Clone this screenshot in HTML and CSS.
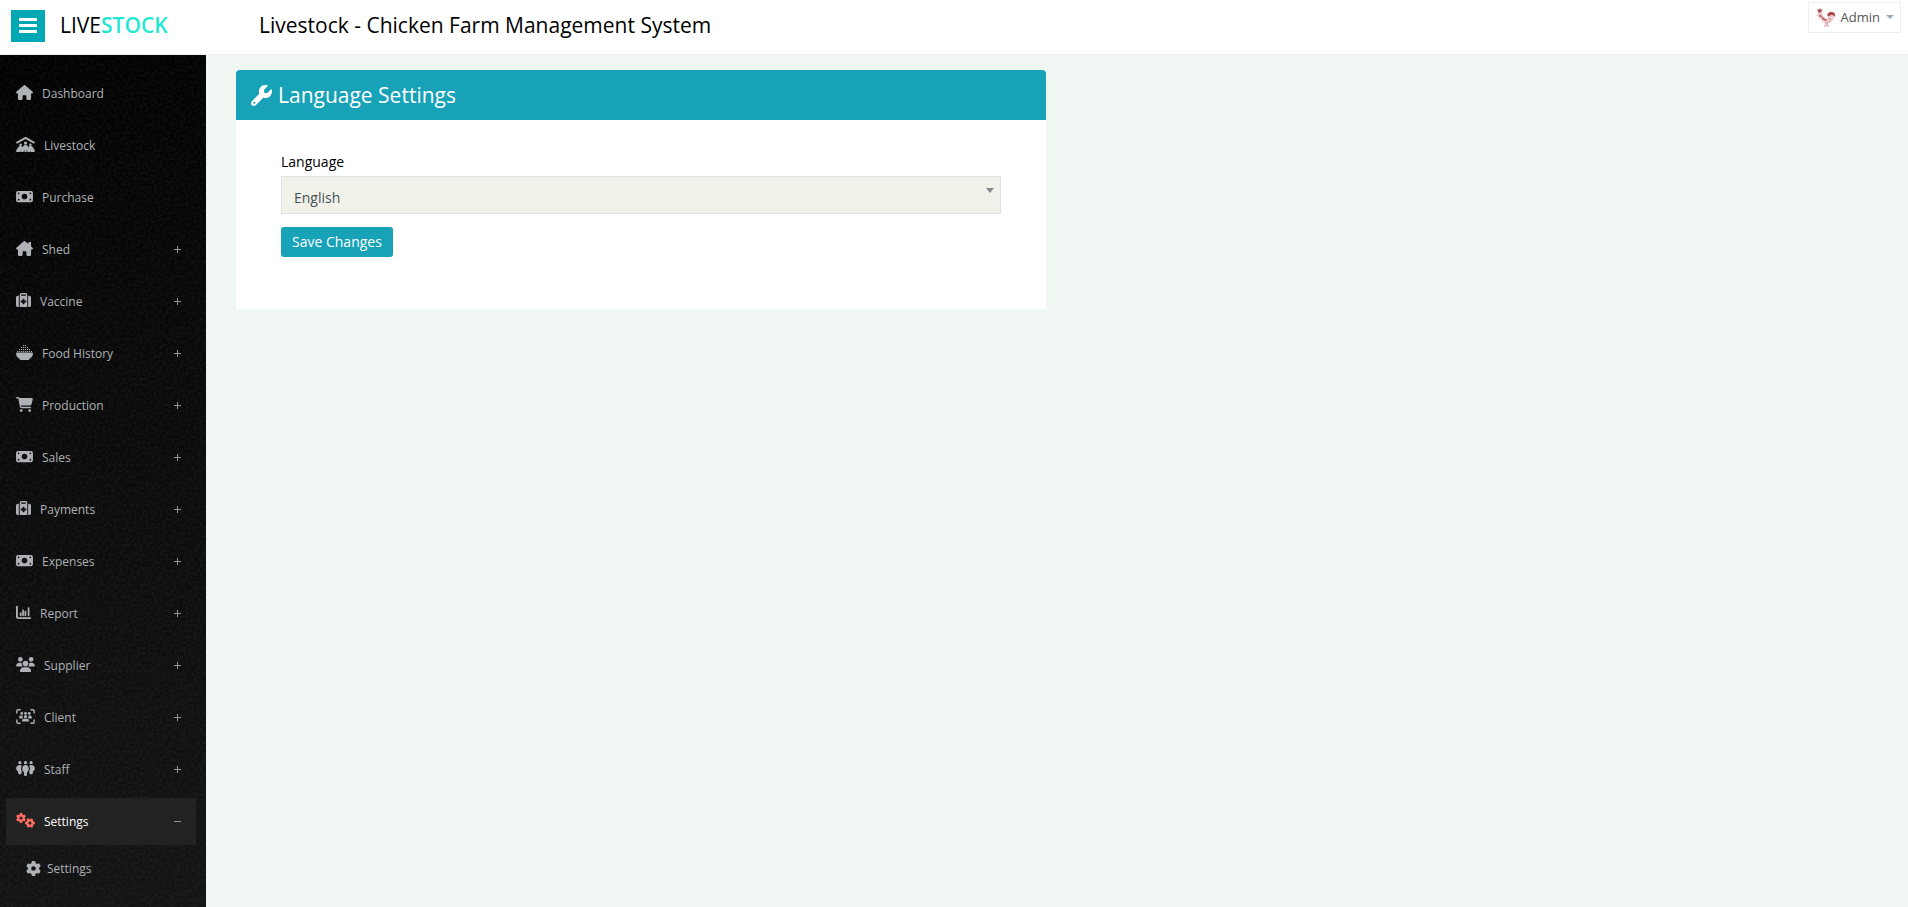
FILE: index.html
```html
<!DOCTYPE html>
<html lang="en">
<head>
<meta charset="utf-8">
<title>Livestock - Chicken Farm Management System</title>
<link rel="stylesheet" href="styles.css">
</head>
<body>
<svg class="sprite" aria-hidden="true">
  <symbol id="house" viewBox="0 0 576 512"><path d="M575.8 255.5c0 18-15 32.1-32 32.1h-32l.7 160.2c0 2.7-.2 5.4-.5 8.1V472c0 22.1-17.9 40-40 40H392c-22.1 0-40-17.9-40-40V384c0-17.7-14.3-32-32-32H256c-17.7 0-32 14.3-32 32v88c0 22.1-17.9 40-40 40H104c-22.1 0-40-17.9-40-40V287.6H32c-18 0-32-14-32-32.1c0-9 3-17 10-24L266.4 8c7-7 15-8 22-8s15 2 21 7L564.8 231.5c8 7 12 15 11 24z"/></symbol>
  <symbol id="chimney" viewBox="0 0 576 512"><path d="M575.8 255.5c0 18-15 32.1-32 32.1h-32l.7 184.4c0 22.1-17.9 40-40 40H392c-22.1 0-40-17.9-40-40V384c0-17.7-14.3-32-32-32H256c-17.7 0-32 14.3-32 32v88c0 22.1-17.9 40-40 40H104c-22.1 0-40-17.9-40-40V287.6H32c-18 0-32-14-32-32.1c0-9 3-17 10-24L266.4 8c7-7 15-8 22-8s15 2 21 7L416 100V64c0-17.7 14.3-32 32-32h32c17.7 0 32 14.3 32 32v121l52.8 46.5c8 7 12 15 11 24z"/></symbol>
  <symbol id="roof" viewBox="0 0 640 512"><path d="M335.5 4l288 160c15.4 8.6 21 28.1 12.4 43.5s-28.1 21-43.5 12.4L320 68.6 47.5 220c-15.4 8.6-34.9 3-43.5-12.4s-3-34.9 12.4-43.5L304.5 4c9.7-5.4 21.4-5.4 31 0z"/><circle cx="320" cy="208" r="56"/><circle cx="152" cy="264" r="44"/><circle cx="488" cy="264" r="44"/><path d="M152 304c34 0 60 16 76 42l-70 126c-8 14-8 28-4 40H38c-32 0-46-30-32-58l60-108c18-28 46-42 86-42zM488 304c-34 0-60 16-76 42l70 126c8 14 8 28 4 40h116c32 0 46-30 32-58l-60-108c-18-28-46-42-86-42zM320 272c36 0 62 16 78 44l76 140c14 26-4 56-32 56h-54l-30-92v92h-76v-92l-30 92h-54c-28 0-46-30-32-56l76-140c16-28 42-44 78-44z"/></symbol>
  <symbol id="bill" viewBox="0 0 576 512"><path fill-rule="evenodd" d="M64 64C28.7 64 0 92.7 0 128V384c0 35.3 28.7 64 64 64H512c35.3 0 64-28.7 64-64V128c0-35.3-28.7-64-64-64zM288 160a96 96 0 1 1 0 192 96 96 0 1 1 0-192zM88 118a30 30 0 1 1 0 60 30 30 0 1 1 0-60zM488 118a30 30 0 1 1 0 60 30 30 0 1 1 0-60zM88 334a30 30 0 1 1 0 60 30 30 0 1 1 0-60zM488 334a30 30 0 1 1 0 60 30 30 0 1 1 0-60z"/></symbol>
  <symbol id="medical" viewBox="0 0 512 512"><path fill-rule="evenodd" d="M184 48H328c4.4 0 8 3.6 8 8V96H176V56c0-4.4 3.6-8 8-8zm-56 8V480H384V56c0-30.9-25.1-56-56-56H184c-30.9 0-56 25.1-56 56zM96 96H64C28.7 96 0 124.7 0 160V416c0 35.3 28.7 64 64 64H96zm320 384h32c35.3 0 64-28.7 64-64V160c0-35.3-28.7-64-64-64H416zM224 208c0-8.8 7.2-16 16-16h32c8.8 0 16 7.2 16 16v48h48c8.8 0 16 7.2 16 16v32c0 8.8-7.2 16-16 16H288v48c0 8.8-7.2 16-16 16H240c-8.8 0-16-7.2-16-16V320H176c-8.8 0-16-7.2-16-16V272c0-8.8 7.2-16 16-16h48z"/></symbol>
  <symbol id="bowl" viewBox="0 0 576 512"><path d="M28 260h520c16 0 28 12 28 28 0 88-48 144-116 180l-4 14c-3 18-17 30-34 30H154c-17 0-31-12-34-30l-4-14C48 432 0 376 0 288c0-16 12-28 28-28z"/><path d="M34 221h510M102 153h374M170 85h238M238 17h102" fill="none" stroke="currentColor" stroke-width="38" stroke-dasharray="38 30"/></symbol>
  <symbol id="cart" viewBox="0 0 576 512"><path d="M0 24C0 10.7 10.7 0 24 0H69.5c22 0 41.5 12.8 50.6 32h411c26.3 0 45.5 25 38.6 50.4l-41 152.3c-8.5 31.4-37 53.3-69.5 53.3H170.7l5.4 28.5c2.2 11.3 12.1 19.5 23.6 19.5H488c13.3 0 24 10.7 24 24s-10.7 24-24 24H199.7c-34.6 0-64.3-24.6-70.7-58.5L77.4 54.5c-.7-3.8-4-6.5-7.9-6.5H24C10.7 48 0 37.3 0 24zM128 464a48 48 0 1 1 96 0 48 48 0 1 1-96 0zm336-48a48 48 0 1 1 0 96 48 48 0 1 1 0-96z"/></symbol>
  <symbol id="chart" viewBox="0 0 512 512"><path d="M32 60v340c0 28 20 48 48 48h400" fill="none" stroke="currentColor" stroke-width="64" stroke-linecap="round"/><path d="M160 350v-70M240 350V180M320 350V230M430 350V110" fill="none" stroke="currentColor" stroke-width="60" stroke-linecap="round"/></symbol>
  <symbol id="users" viewBox="0 0 640 512"><circle cx="144" cy="80" r="80"/><circle cx="512" cy="80" r="80"/><circle cx="320" cy="224" r="96"/><path d="M0 298.7C0 239.8 47.8 192 106.7 192h42.7c15.9 0 31 3.5 44.6 9.7-7 46 8 88 41.4 118.3H21.3C9.6 320 0 310.4 0 298.7zM405.3 320c33-30 48-72 41.4-118.3 13.6-6.3 28.7-9.7 44.6-9.7h42.7C592.2 192 640 239.8 640 298.7c0 11.8-9.6 21.3-21.3 21.3zM128 485.3C128 411.7 187.7 352 261.3 352H378.7C452.3 352 512 411.7 512 485.3c0 14.7-11.9 26.7-26.7 26.7H154.7c-14.7 0-26.7-11.9-26.7-26.7z"/></symbol>
  <symbol id="viewfinder" viewBox="0 0 640 512"><path d="M24 136V72c0-28 20-48 48-48h64M504 24h64c28 0 48 20 48 48v64M616 376v64c0 28-20 48-48 48h-64M136 488H72c-28 0-48-20-48-48v-64" fill="none" stroke="currentColor" stroke-width="48" stroke-linecap="round"/><circle cx="192" cy="150" r="48"/><circle cx="320" cy="150" r="50"/><circle cx="448" cy="150" r="48"/><path d="M160 220h64c-14 36-8 70 22 100H116c-12-2-18-12-16-26 4-40 24-70 60-74zM480 220h-64c14 36 8 70-22 100h130c12-2 18-12 16-26-4-40-24-70-60-74z"/><circle cx="320" cy="262" r="54"/><path d="M270 336h100c40 0 64 30 70 66 2 12-6 22-18 22H218c-12 0-20-10-18-22 6-36 30-66 70-66z"/></symbol>
  <symbol id="group" viewBox="0 0 640 512"><circle cx="128" cy="56" r="56"/><circle cx="320" cy="56" r="56"/><circle cx="512" cy="56" r="56"/><path d="M128 136c30 0 50 8 66 26-34 60-34 130 0 190l-10 64c-2 18-14 32-32 32h-48c-18 0-30-14-32-32l-12-64C22 330 0 290 0 248 0 186 50 136 128 136zM512 136c-30 0-50 8-66 26 34 60 34 130 0 190l10 64c2 18 14 32 32 32h48c18 0 30-14 32-32l12-64c38-22 60-62 60-104 0-62-50-112-128-112zM320 136c66 0 112 56 112 128 0 50-22 90-56 112l-8 104c-2 18-14 32-32 32h-32c-18 0-30-14-32-32l-8-104c-34-22-56-62-56-112 0-72 46-128 112-128z"/></symbol>
  <symbol id="gear" viewBox="0 0 512 512"><path d="M495.9 166.6c3.2 8.7 .5 18.4-6.4 24.6l-43.3 39.4c1.1 8.3 1.7 16.8 1.7 25.4s-.6 17.1-1.7 25.4l43.3 39.4c6.9 6.2 9.6 15.9 6.4 24.6c-4.4 11.9-9.7 23.3-15.8 34.3l-4.7 8.1c-6.6 11-14 21.4-22.1 31.2c-5.9 7.2-15.7 9.6-24.5 6.8l-55.7-17.7c-13.4 10.3-28.2 18.9-44 25.4l-12.5 57.1c-2 9.1-9 16.3-18.2 17.8c-13.8 2.3-28 3.5-42.5 3.5s-28.7-1.2-42.5-3.5c-9.2-1.5-16.2-8.7-18.2-17.8l-12.5-57.1c-15.8-6.5-30.6-15.1-44-25.4L83.1 425.9c-8.8 2.8-18.6 .3-24.5-6.8c-8.1-9.8-15.5-20.2-22.1-31.2l-4.7-8.1c-6.1-11-11.4-22.4-15.8-34.3c-3.2-8.7-.5-18.4 6.4-24.6l43.3-39.4C64.6 273.1 64 264.6 64 256s.6-17.1 1.7-25.4L22.4 191.2c-6.9-6.2-9.6-15.9-6.4-24.6c4.4-11.9 9.7-23.3 15.8-34.3l4.7-8.1c6.6-11 14-21.4 22.1-31.2c5.9-7.2 15.7-9.6 24.5-6.8l55.7 17.7c13.4-10.3 28.2-18.9 44-25.4l12.5-57.1c2-9.1 9-16.3 18.2-17.8C227.3 1.2 241.5 0 256 0s28.7 1.2 42.5 3.5c9.2 1.5 16.2 8.7 18.2 17.8l12.5 57.1c15.8 6.5 30.6 15.1 44 25.4l55.7-17.7c8.8-2.8 18.6-.3 24.5 6.8c8.1 9.8 15.5 20.2 22.1 31.2l4.7 8.1c6.1 11 11.4 22.4 15.8 34.3zM256 336a80 80 0 1 0 0-160 80 80 0 1 0 0 160z"/></symbol>
  <symbol id="gears" viewBox="0 0 640 512"><use href="#gear" x="-4" y="0" width="340" height="340"/><g transform="rotate(30 472 342)"><use href="#gear" x="302" y="172" width="340" height="340"/></g></symbol>
  <symbol id="wrench" viewBox="0 0 512 512"><path d="M352 320c88.4 0 160-71.6 160-160c0-15.3-2.2-30.1-6.2-44.2c-3.1-10.8-16.4-13.2-24.3-5.3l-76.8 76.8c-3 3-7.1 4.7-11.3 4.7H336c-8.8 0-16-7.2-16-16V118.6c0-4.2 1.7-8.3 4.7-11.3l76.8-76.8c7.9-7.9 5.4-21.2-5.3-24.3C382.1 2.2 367.3 0 352 0C263.6 0 192 71.6 192 160c0 19.1 3.4 37.5 9.5 54.5L19.9 396.1C7.2 408.8 0 426.1 0 444.1C0 481.6 30.4 512 67.9 512c18 0 35.3-7.2 48-19.9L297.5 310.5c17 6.2 35.4 9.5 54.5 9.5zM80 408a24 24 0 1 1 0 48 24 24 0 1 1 0-48z"/></symbol>
</svg>

<header class="topbar">
  <button class="toggle" type="button" aria-label="Toggle navigation"><svg viewBox="0 0 18 16"><path d="M1 1.500h16M1 7.500h16M1 13.500h16" stroke="currentColor" stroke-width="3" stroke-linecap="round"/></svg></button>
  <a class="brand" href="#">LIVE<span class="brand-accent">STOCK</span></a>
  <h1 class="title">Livestock - Chicken Farm Management System</h1>
  <button class="user" type="button">
    <svg class="avatar" viewBox="0 0 20 20" aria-hidden="true"><path d="M1 2l2 1 1-2 1 2 2-1-1 3 1 4 3 2 3 0 2-3 3 1-1 4-3 3-3 1-3-1-3-3-1-3-1 2-1-3-2 0 2-2z" fill="#ecd0d0"/><path d="M1 2l2 1 1-2 1 2 2-1-2 3-2 1zM3 7l1 4 1-2zM11 8c2-4 6-4 8-1l0 3c-3-3-5-2-6 0zM5 7l2 4 4 2-1 1-4-2z" fill="#b04a4a"/><path d="M12 11l3 1-2 3M10 15v4H8M12 15l-1 4h2" fill="none" stroke="#d99c94"/></svg>
    <span>Admin</span><span class="caret"></span>
  </button>
</header>

<div class="layout">
  <nav class="sidebar" aria-label="Main">
    <ul class="menu">
      <li><a class="item" href="#"><svg class="icon w17"><use href="#house"/></svg><span class="label">Dashboard</span></a></li>
      <li><a class="item" href="#"><svg class="icon w19"><use href="#roof"/></svg><span class="label">Livestock</span></a></li>
      <li><a class="item" href="#"><svg class="icon w17"><use href="#bill"/></svg><span class="label">Purchase</span></a></li>
      <li><a class="item more" href="#"><svg class="icon w17"><use href="#chimney"/></svg><span class="label">Shed</span></a></li>
      <li><a class="item more" href="#"><svg class="icon w15"><use href="#medical"/></svg><span class="label">Vaccine</span></a></li>
      <li><a class="item more" href="#"><svg class="icon w17"><use href="#bowl"/></svg><span class="label">Food History</span></a></li>
      <li><a class="item more" href="#"><svg class="icon w17"><use href="#cart"/></svg><span class="label">Production</span></a></li>
      <li><a class="item more" href="#"><svg class="icon w17"><use href="#bill"/></svg><span class="label">Sales</span></a></li>
      <li><a class="item more" href="#"><svg class="icon w15"><use href="#medical"/></svg><span class="label">Payments</span></a></li>
      <li><a class="item more" href="#"><svg class="icon w17"><use href="#bill"/></svg><span class="label">Expenses</span></a></li>
      <li><a class="item more" href="#"><svg class="icon w15"><use href="#chart"/></svg><span class="label">Report</span></a></li>
      <li><a class="item more" href="#"><svg class="icon w19"><use href="#users"/></svg><span class="label">Supplier</span></a></li>
      <li><a class="item more" href="#"><svg class="icon w19"><use href="#viewfinder"/></svg><span class="label">Client</span></a></li>
      <li><a class="item more" href="#"><svg class="icon w19"><use href="#group"/></svg><span class="label">Staff</span></a></li>
      <li>
        <a class="item more active" href="#" aria-expanded="true"><svg class="icon w19"><use href="#gears"/></svg><span class="label">Settings</span></a>
        <ul class="submenu"><li><a class="subitem" href="#"><svg class="icon w15"><use href="#gear"/></svg><span class="label">Settings</span></a></li></ul>
      </li>
    </ul>
  </nav>

  <main class="content">
    <section class="card">
      <h2 class="card-head"><svg class="head-icon"><use href="#wrench"/></svg>Language Settings</h2>
      <form class="card-body">
        <label class="field-label" for="language">Language</label>
        <div class="select-wrap"><select class="select" id="language"><option>English</option></select></div>
        <button class="save" type="button">Save Changes</button>
      </form>
    </section>
  </main>
</div>
</body>
</html>
```
FILE: styles.css
```css
* { box-sizing: border-box; }

body {
  margin: 0;
  height: 100vh;
  overflow: hidden;
  display: flex;
  flex-direction: column;
  background: #f0f7f3;
  color: #000;
  font: 14px/20px "Open Sans", sans-serif;
}

a { color: inherit; text-decoration: none; }
button, select { font: inherit; }
ul { list-style: none; margin: 0; padding: 0; }
svg { display: block; fill: currentColor; }
.sprite { position: absolute; width: 0; height: 0; }

.topbar {
  flex: none;
  display: flex;
  align-items: flex-start;
  height: 55px;
  padding: 0 7px 0 11px;
  background: #fff;
  border-bottom: 1px solid #e9f0f2;
}

.toggle {
  width: 34px;
  height: 32px;
  margin-top: 10px;
  padding: 8px;
  border: 0;
  background: #00a8b3;
  color: #fff;
}
.toggle svg { width: 18px; height: 16px; }

.brand {
  width: 199px;
  margin: 10px 0 0 15px;
  font-size: 21px;
  line-height: 30px;
}
.brand-accent { color: #22e8d2; font-weight: 600; }

.title {
  margin: 10px auto 0 0;
  font-size: 21px;
  line-height: 30px;
  font-weight: 400;
}

.user {
  display: flex;
  align-items: center;
  height: 31px;
  margin-top: 2px;
  padding: 0 6px 2px 7px;
  border: 1px solid #eee;
  background: #fff;
  color: #555;
  font-size: 13px;
}
.avatar { width: 20px; height: 20px; margin-right: 5px; }
.caret {
  margin-left: 6px;
  border: 4px solid transparent;
  border-top-color: #a1a9b8;
  border-bottom: 0;
}

.layout { flex: 1; display: flex; min-height: 0; }

.sidebar {
  flex: none;
  width: 206px;
  padding: 15px 10px 0 6px;
  color: #aeb2b7;
  font-size: 12px;
  background:
    url("data:image/svg+xml,%3Csvg xmlns='http://www.w3.org/2000/svg' width='206' height='206'%3E%3Cfilter id='n' x='0' y='0' width='1' height='1'%3E%3CfeTurbulence type='fractalNoise' baseFrequency='.35' numOctaves='3' stitchTiles='stitch'/%3E%3CfeColorMatrix values='0 0 0 0 1 0 0 0 0 1 0 0 0 0 1 .1 0 0 0 -.035'/%3E%3C/filter%3E%3Crect width='206' height='206' filter='url(%23n)'/%3E%3C/svg%3E"),
    linear-gradient(170deg, #010101, #090909 40%, #131313);
}

.menu > li { margin-bottom: 5px; }
.item {
  display: flex;
  align-items: center;
  gap: 9px;
  height: 47px;
  padding: 0 15px 0 10px;
}
.item .label { flex: 1; }
.more::after {
  content: "";
  width: 7px;
  height: 7px;
  background:
    linear-gradient(#8f9296, #8f9296) center / 7px 1px no-repeat,
    linear-gradient(#8f9296, #8f9296) center / 1px 7px no-repeat;
}
.active { background: #222; color: #fff; }
.active .icon { color: #ff6c60; }
.active::after { background: linear-gradient(#8f9296, #8f9296) center / 7px 1px no-repeat; }

.icon { flex: none; height: 15px; margin-bottom: 2px; }
.w15 { width: 15px; }
.w17 { width: 17px; }
.w19 { width: 19px; }

.subitem {
  display: flex;
  align-items: center;
  gap: 6px;
  height: 48px;
  padding-left: 20px;
}

.content { flex: 1; padding: 15px 22px 15px 30px; }
.card { width: calc(50% - 15px); background: #fff; border-radius: 4px 4px 0 0; }
.card-head {
  display: flex;
  align-items: center;
  gap: 6px;
  height: 50px;
  margin: 0;
  padding: 0 15px;
  border-radius: 4px 4px 0 0;
  background: #17a2b8;
  color: #fff;
  font-size: 21px;
  font-weight: 400;
}
.head-icon { width: 21px; height: 21px; }

.card-body { padding: 32px 45px 52px; }
.field-label { display: block; margin-bottom: 4px; }
.select-wrap { position: relative; margin-bottom: 13px; }
.select-wrap::after {
  content: "";
  position: absolute;
  top: 12px;
  right: 7px;
  border: 4px solid transparent;
  border-top: 5px solid #888;
  border-bottom: 0;
}
.select {
  appearance: none;
  display: block;
  width: 100%;
  height: 38px;
  padding: 5px 12px 0;
  border: 1px solid #e0e2e4;
  border-radius: 0;
  background: #f0f2e9;
  color: #495057;
}
.save {
  height: 30px;
  padding: 0 11px;
  border: 0;
  border-radius: 3px;
  background: #17a2b8;
  color: #fff;
}
```
